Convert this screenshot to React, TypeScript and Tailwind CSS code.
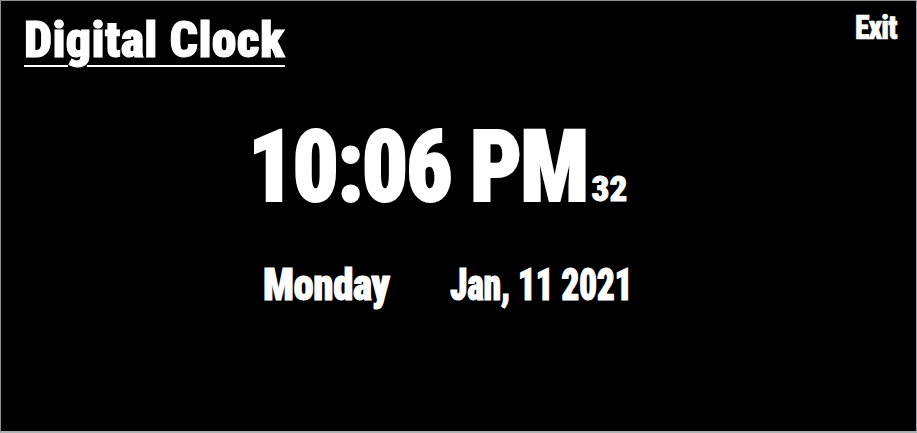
import React from "react";

export default function App() {
  return (
    <div className="w-[917px] h-[433px] bg-black text-white border-t border-l border-r border-b-2 border-t-[#8a8f8f] border-l-[#8a8f8f] border-r-[#9aa3a3] border-b-[#aab3b3] font-['Roboto_Condensed',Roboto,sans-serif] [font-stretch:condensed] font-black leading-none flex flex-col overflow-hidden">
      <div className="flex justify-between items-start">
        <div className="pl-[23px] pt-[14px]">
          <span className="text-[50px] underline decoration-2 underline-offset-[8px] tracking-[0.3px] [-webkit-text-stroke:1px_white]">Digital Clock</span>
        </div>
        <div className="pr-[21px] pt-[10px]">
          <span className="inline-block w-[40px] whitespace-nowrap text-[33px]">
            <span className="inline-block origin-left scale-x-[0.9] tracking-[-1px] [-webkit-text-stroke:0.6px_white]">Exit</span>
          </span>
        </div>
      </div>
      <div className="flex items-baseline justify-center mt-[52px] pr-[37px]">
        <span className="inline-block w-[336px] -ml-[5px] whitespace-nowrap text-[100px]">
          <span className="inline-block origin-left scale-x-[0.907] tracking-[-2px] [-webkit-text-stroke:2px_white]">10:06 PM</span>
        </span>
        <span className="text-[35px] ml-[8px] [-webkit-text-stroke:0.8px_white]">32</span>
      </div>
      <div className="flex items-baseline justify-center mt-[46px] pr-[24px] gap-[61px] text-[44px]">
        <span className="inline-block w-[126px] whitespace-nowrap">
          <span className="inline-block origin-left scale-x-[0.93] tracking-[-0.5px] [-webkit-text-stroke:1px_white]">Monday</span>
        </span>
        <span className="inline-block w-[180px] whitespace-nowrap">
          <span className="inline-block origin-left scale-x-[0.81] tracking-[-0.5px] [-webkit-text-stroke:1px_white]">Jan, 11 2021</span>
        </span>
      </div>
    </div>
  );
}
